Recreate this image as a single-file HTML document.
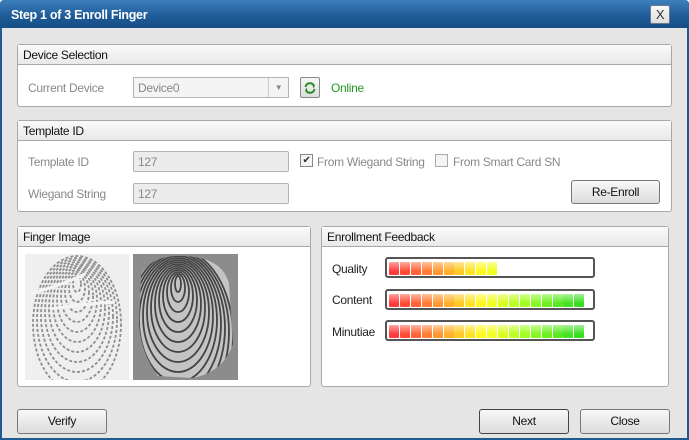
<!DOCTYPE html>
<html><head><meta charset="utf-8"><style>
*{margin:0;padding:0;box-sizing:border-box}
body{width:689px;height:440px;background:#fff;font-family:"Liberation Sans",sans-serif;font-size:12px;letter-spacing:-0.3px;color:#222;position:relative;overflow:hidden}
.abs{position:absolute}
.win{left:0;top:0;width:689px;height:440px;background:#1f5a93;border-radius:4px 4px 0 0}
.title{left:0;top:0;width:689px;height:28px;background:linear-gradient(#3d7fbc,#1d5a96 60%,#174e86);border-radius:4px 4px 0 0}
.title span{position:absolute;left:11px;top:8px;color:#fff;font-weight:bold;font-size:12.5px}
.xbtn{left:650px;top:5px;width:20px;height:19px;background:linear-gradient(#fafafa,#ddd);border:1px solid #6c7a8a;border-radius:2px;text-align:center;font-size:13px;line-height:17px;color:#333}
.client{left:2px;top:28px;width:685px;height:410px;background:#e5e5e5}
.panel{background:#fff;border:1px solid #a8a8a8;border-radius:3px}
.ph{position:absolute;left:0;top:0;right:0;height:20px;background:linear-gradient(#fafafa,#e9e9e9);border-bottom:1px solid #a8a8a8;padding:3px 0 0 5px;font-size:12px;color:#111}
.lbl{color:#888;font-size:12px}
.inp{background:#ececec;border:1px solid #b4b4b4;border-radius:2px;color:#888;padding:3px 0 0 4px;height:21px}
.btn{background:linear-gradient(#f8f8f8,#dcdcdc);border:1px solid #777;border-radius:3px;text-align:center;line-height:22px;font-size:12px;color:#111}
.bar{background:#fff;border:2px solid #555;border-radius:3px;height:21px}
.seg{position:absolute;top:3px;width:10px;height:13px;border-radius:1px}
</style></head><body>
<div class="abs win"></div>
<div class="abs title"><span>Step 1 of 3 Enroll Finger</span></div>
<div class="abs xbtn">X</div>
<div class="abs client"></div>

<div class="abs panel" style="left:17px;top:44px;width:655px;height:63px"><div class="ph">Device Selection</div></div>
<div class="abs lbl" style="left:28px;top:81px">Current Device</div>
<div class="abs" style="left:133px;top:77px;width:156px;height:21px;background:#f4f4f4;border:1px solid #b4b4b4;color:#888;padding:3px 0 0 4px">Device0</div>
<div class="abs" style="left:268px;top:78px;width:20px;height:19px;border-left:1px solid #ccc;color:#888;font-size:8px;text-align:center;line-height:19px">▼</div>
<div class="abs" style="left:300px;top:77px;width:20px;height:21px;background:linear-gradient(#f8f8f8,#ddd);border:1px solid #888;border-radius:2px"></div>
<svg class="abs" style="left:303px;top:81px" width="14" height="14" viewBox="0 0 14 14"><path d="M2.5 6A4.6 4.6 0 0 1 11 4.5" fill="none" stroke="#2a8a2a" stroke-width="2"/><path d="M9 2.5L12 4.5 10.5 7.5Z" fill="#2a8a2a"/><path d="M11.5 8A4.6 4.6 0 0 1 3 9.5" fill="none" stroke="#2a8a2a" stroke-width="2"/><path d="M5 11.5L2 9.5 3.5 6.5Z" fill="#2a8a2a"/></svg>
<div class="abs" style="left:331px;top:81px;color:#1e9a1e">Online</div>

<div class="abs panel" style="left:17px;top:120px;width:655px;height:92px"><div class="ph">Template ID</div></div>
<div class="abs lbl" style="left:28px;top:155px">Template ID</div>
<div class="abs inp" style="left:133px;top:151px;width:156px">127</div>
<div class="abs lbl" style="left:28px;top:187px">Wiegand String</div>
<div class="abs inp" style="left:133px;top:183px;width:156px">127</div>
<div class="abs" style="left:300px;top:154px;width:13px;height:13px;border:1px solid #888;background:#f4f4f4;font-size:10px;line-height:11px;text-align:center;color:#234">✔</div>
<div class="abs lbl" style="left:317px;top:155px">From Wiegand String</div>
<div class="abs" style="left:435px;top:154px;width:13px;height:13px;border:1px solid #aaa;background:#f4f4f4"></div>
<div class="abs lbl" style="left:453px;top:155px">From Smart Card SN</div>
<div class="abs btn" style="left:571px;top:180px;width:89px;height:24px">Re-Enroll</div>

<div class="abs panel" style="left:17px;top:226px;width:294px;height:161px"><div class="ph">Finger Image</div></div>
<svg class="abs" style="left:25px;top:254px" width="104" height="126" viewBox="0 0 104 126">
<rect width="104" height="126" fill="#efefef"/>
<g fill="none" stroke="#777" stroke-width="1.8" stroke-dasharray="3 2" opacity="0.8">
<ellipse cx="52" cy="30" rx="4" ry="8"/><ellipse cx="52" cy="34" rx="8" ry="14"/><ellipse cx="52" cy="38" rx="12" ry="20"/><ellipse cx="52" cy="42" rx="16" ry="26"/><ellipse cx="52" cy="46" rx="20" ry="32"/><ellipse cx="52" cy="50" rx="24" ry="38"/><ellipse cx="52" cy="54" rx="28" ry="44"/><ellipse cx="52" cy="58" rx="32" ry="50"/><ellipse cx="52" cy="62" rx="36" ry="56"/><ellipse cx="52" cy="66" rx="40" ry="62"/><ellipse cx="52" cy="70" rx="44" ry="68"/>
</g>
<path d="M5 40Q40 30 60 20M25 55Q55 50 90 48" stroke="#f4f4f4" stroke-width="3" fill="none"/>
</svg>
<svg class="abs" style="left:133px;top:254px" width="105" height="126" viewBox="0 0 105 126">
<rect width="105" height="126" fill="#8c8c8c"/>
<clipPath id="c"><path d="M8 20Q20 0 52 2Q90 4 96 30L100 90Q90 118 60 124L25 122Q8 100 6 70Z"/></clipPath>
<g clip-path="url(#c)"><rect width="105" height="126" fill="#c4c4c4"/>
<g fill="none" stroke="#444" stroke-width="1.8">
<ellipse cx="45" cy="30" rx="3" ry="8"/><ellipse cx="45" cy="34" rx="7" ry="14"/><ellipse cx="45" cy="38" rx="11" ry="20"/><ellipse cx="45" cy="42" rx="15" ry="26"/><ellipse cx="45" cy="46" rx="19" ry="32"/><ellipse cx="45" cy="50" rx="23" ry="38"/><ellipse cx="45" cy="54" rx="27" ry="44"/><ellipse cx="45" cy="58" rx="31" ry="50"/><ellipse cx="45" cy="62" rx="35" ry="56"/><ellipse cx="45" cy="66" rx="39" ry="62"/><ellipse cx="45" cy="70" rx="43" ry="68"/><ellipse cx="45" cy="74" rx="47" ry="74"/><ellipse cx="45" cy="78" rx="51" ry="80"/><ellipse cx="45" cy="82" rx="55" ry="86"/>
</g></g></svg>

<div class="abs panel" style="left:321px;top:226px;width:348px;height:161px"><div class="ph">Enrollment Feedback</div></div>
<div class="abs" style="left:332px;top:262px">Quality</div>
<div class="abs" style="left:332px;top:293px">Content</div>
<div class="abs" style="left:332px;top:325px">Minutiae</div>
<div class="abs bar" id="b1" style="left:385px;top:257px;width:210px"></div>
<div class="abs bar" id="b2" style="left:385px;top:289px;width:210px"></div>
<div class="abs bar" id="b3" style="left:385px;top:320px;width:210px"></div>

<div class="abs btn" style="left:17px;top:409px;width:90px;height:25px">Verify</div>
<div class="abs btn" style="left:479px;top:409px;width:90px;height:25px;border-color:#444">Next</div>
<div class="abs btn" style="left:580px;top:409px;width:90px;height:25px">Close</div>
<script>
var cols=["#ff3a3a","#ff4c38","#ff6236","#ff7c32","#ff962e","#ffb02a","#ffca26","#ffe222","#fff820","#f2ff20","#d8ff20","#bcff20","#a0ff20","#84f820","#6cf020","#58ea20","#44e420","#38de20"];
function fill(id,n){var b=document.getElementById(id);for(var i=0;i<n;i++){var s=document.createElement('div');s.className='seg';s.style.left=(2+i*10.9)+'px';s.style.background='linear-gradient('+cols[i]+'77,'+cols[i]+' 70%)';b.appendChild(s);}}
fill('b1',10);fill('b2',18);fill('b3',18);
</script>
</body></html>
